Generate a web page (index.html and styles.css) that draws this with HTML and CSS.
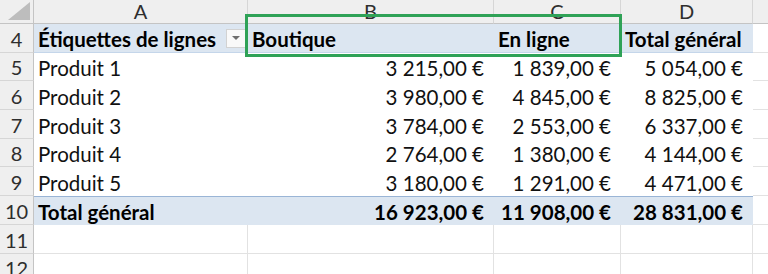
FILE: index.html
```html
<!DOCTYPE html>
<html lang="fr">
<head>
<meta charset="utf-8">
<title>Tableau croisé</title>
<link rel="stylesheet" href="styles.css">
</head>
<body>
<div class="sheet">
  <div class="grid">
    <div class="corner"><span class="tri"></span></div>
    <div class="ch">A</div>
    <div class="ch">B</div>
    <div class="ch">C</div>
    <div class="ch">D</div>
    <div class="ch"></div>

    <div class="rh">4</div>
    <div class="c hd b left"><span>Étiquettes de lignes</span><span class="dd"><span class="ddtri"></span></span></div>
    <div class="c hd b">Boutique</div>
    <div class="c hd b">En ligne</div>
    <div class="c hd b">Total général</div>
    <div class="c g"></div>

    <div class="rh">5</div>
    <div class="c pv">Produit 1</div>
    <div class="c pv num">3 215,00 €</div>
    <div class="c pv num">1 839,00 €</div>
    <div class="c pv num">5 054,00 €</div>
    <div class="c g"></div>

    <div class="rh">6</div>
    <div class="c pv">Produit 2</div>
    <div class="c pv num">3 980,00 €</div>
    <div class="c pv num">4 845,00 €</div>
    <div class="c pv num">8 825,00 €</div>
    <div class="c g"></div>

    <div class="rh">7</div>
    <div class="c pv">Produit 3</div>
    <div class="c pv num">3 784,00 €</div>
    <div class="c pv num">2 553,00 €</div>
    <div class="c pv num">6 337,00 €</div>
    <div class="c g"></div>

    <div class="rh">8</div>
    <div class="c pv">Produit 4</div>
    <div class="c pv num">2 764,00 €</div>
    <div class="c pv num">1 380,00 €</div>
    <div class="c pv num">4 144,00 €</div>
    <div class="c g"></div>

    <div class="rh">9</div>
    <div class="c pv">Produit 5</div>
    <div class="c pv num">3 180,00 €</div>
    <div class="c pv num">1 291,00 €</div>
    <div class="c pv num">4 471,00 €</div>
    <div class="c g"></div>

    <div class="rh">10</div>
    <div class="c tot b">Total général</div>
    <div class="c tot b num">16 923,00 €</div>
    <div class="c tot b num">11 908,00 €</div>
    <div class="c tot b num">28 831,00 €</div>
    <div class="c g"></div>

    <div class="rh">11</div>
    <div class="c g"></div>
    <div class="c g"></div>
    <div class="c g"></div>
    <div class="c g"></div>
    <div class="c g"></div>

    <div class="rh">12</div>
    <div class="c g"></div>
    <div class="c g"></div>
    <div class="c g"></div>
    <div class="c g"></div>
    <div class="c g"></div>
  </div>
  <div class="highlight"></div>
</div>
</body>
</html>
```

FILE: styles.css
```css
html, body {
  margin: 0;
  padding: 0;
  background: #ffffff;
  overflow: hidden;
}

.sheet {
  position: relative;
  width: 768px;
  height: 274px;
  overflow: hidden;
  font-family: Lato, "Open Sans", sans-serif;
  font-size: 20.5px;
  color: #111111;
}

.grid {
  display: grid;
  grid-template-columns: 34px 214px 246px 127px 132px 40px;
  grid-template-rows: 24px repeat(9, 28.7px);
}

.grid > div {
  box-sizing: border-box;
  min-width: 0;
}

.corner {
  position: relative;
  background: #efefef;
  border-right: 1px solid #c4c4c4;
  border-bottom: 1px solid #c4c4c4;
}

.tri {
  position: absolute;
  right: 3px;
  bottom: 3px;
  width: 0;
  height: 0;
  border-left: 22px solid transparent;
  border-bottom: 18px solid #bdbdbd;
}

.ch {
  background: #efefef;
  border-right: 1px solid #d6d6d6;
  border-bottom: 1px solid #c4c4c4;
  color: #2e2e2e;
  font-size: 20px;
  line-height: 23px;
  text-align: center;
}

.rh {
  background: #efefef;
  border-right: 1px solid #c4c4c4;
  border-bottom: 1px solid #d6d6d6;
  color: #2e2e2e;
  font-size: 20px;
  display: flex;
  align-items: flex-end;
  justify-content: center;
  line-height: 24px;
  padding-bottom: 1px;
}

.c {
  display: flex;
  align-items: flex-end;
  white-space: nowrap;
  line-height: 24px;
  padding: 0 10px 1px 4px;
}

.g {
  border-right: 1px solid #e2e2e2;
  border-bottom: 1px solid #e2e2e2;
}

.pv {
  background: #ffffff;
}

.hd {
  background: #dce6f1;
  border-bottom: 1px solid #c5d6ea;
}

.tot {
  background: #dce6f1;
  border-top: 1px solid #9ab5d6;
}

.b {
  font-weight: 700;
  color: #000000;
}

.num {
  justify-content: flex-end;
}

.left {
  justify-content: space-between;
  padding-right: 2px;
}

.dd {
  align-self: center;
  box-sizing: border-box;
  width: 20px;
  height: 19px;
  margin-top: 2px;
  background: #f9f9f9;
  border: 1px solid #d2d2d2;
  display: flex;
  align-items: center;
  justify-content: center;
}

.ddtri {
  width: 0;
  height: 0;
  border-left: 4px solid transparent;
  border-right: 4px solid transparent;
  border-top: 4px solid #6e6e6e;
}

.highlight {
  position: absolute;
  left: 245px;
  top: 14px;
  width: 377px;
  height: 43px;
  box-sizing: border-box;
  border: 3px solid #2fa257;
  pointer-events: none;
}
```
